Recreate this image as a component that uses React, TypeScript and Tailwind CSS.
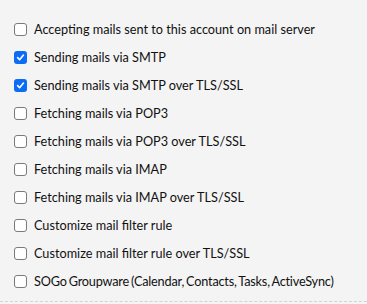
import React from 'react';

const services = [
  { label: 'Accepting mails sent to this account on mail server', checked: false },
  { label: 'Sending mails via SMTP', checked: true },
  { label: 'Sending mails via SMTP over TLS/SSL', checked: true },
  { label: 'Fetching mails via POP3', checked: false },
  { label: 'Fetching mails via POP3 over TLS/SSL', checked: false },
  { label: 'Fetching mails via IMAP', checked: false },
  { label: 'Fetching mails via IMAP over TLS/SSL', checked: false },
  { label: 'Customize mail filter rule', checked: false },
  { label: 'Customize mail filter rule over TLS/SSL', checked: false },
  { label: 'SOGo Groupware (Calendar, Contacts, Tasks, ActiveSync)', checked: false, tight: true },
];

function Box({ checked }: { checked: boolean }) {
  if (checked) {
    return (
      <span className="w-[13px] h-[13px] rounded-[3px] bg-[#0b6cf5] flex items-center justify-center shrink-0">
        <svg width="9" height="9" viewBox="0 0 10 10" fill="none">
          <path d="M1.8 5.2 L4 7.4 L8.3 2.3" stroke="white" strokeWidth="1.8" strokeLinecap="round" strokeLinejoin="round" />
        </svg>
      </span>
    );
  }
  return <span className="w-[13px] h-[13px] rounded-[3px] bg-white border border-[#7a7a7a] shrink-0" />;
}

export default function App() {
  return (
    <div className="w-[367px] h-[304px] bg-[#f4f4f4] overflow-hidden font-['Lato',sans-serif] text-[12.7px] text-[#111]">
      <div className="pt-[15px] pb-[6px] border-b border-dashed border-[#d4d4d4]">
        {services.map((s, i) => (
          <label key={i} className="flex items-center h-[28px] pl-[14px] gap-[7px] whitespace-nowrap">
            <Box checked={s.checked} />
            <span className={s.tight ? 'leading-none tracking-[-0.2px] [word-spacing:-1px]' : 'leading-none'}>
              {s.label}
            </span>
          </label>
        ))}
      </div>
    </div>
  );
}
